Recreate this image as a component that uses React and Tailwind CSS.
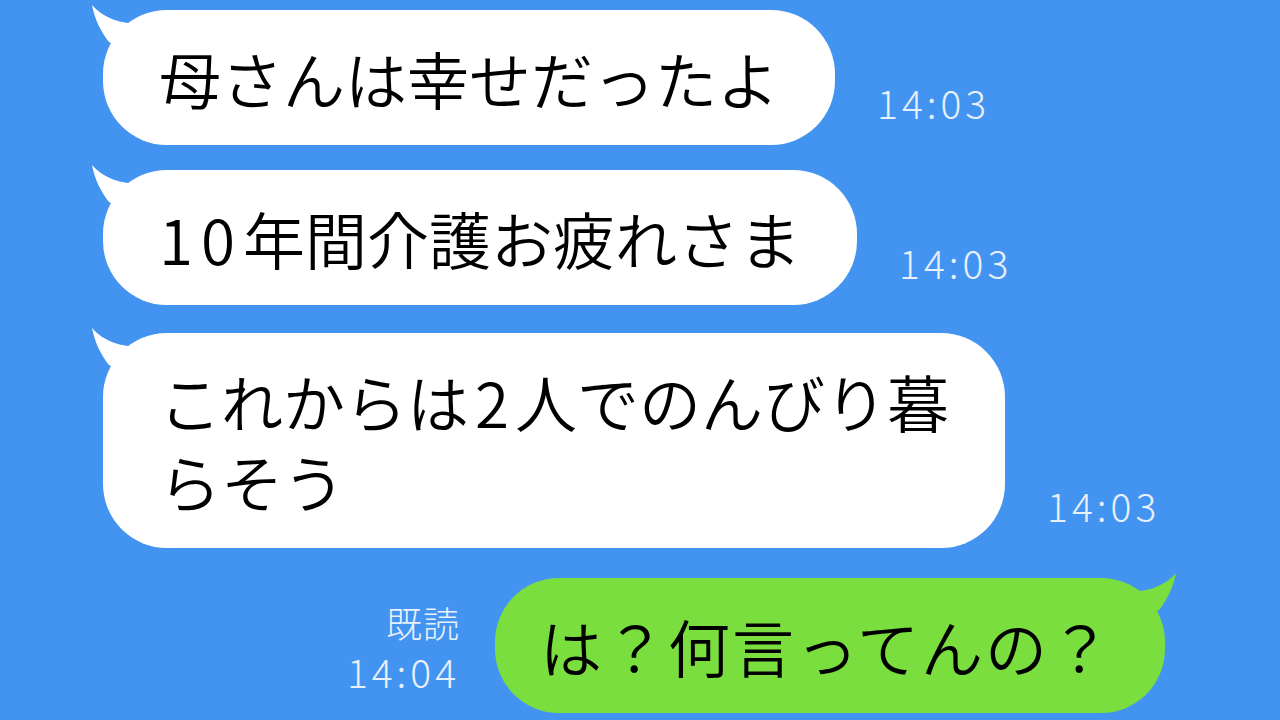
import React from "react";

const jp = "font-['Hiragino_Sans','Noto_Sans_CJK_JP',sans-serif]";

// bubble horn drawn over the top corner
const Tail = ({ color, right }) => (
  <svg
    width="60"
    height="60"
    viewBox="0 0 60 60"
    className={
      right
        ? "absolute right-[-14px] top-[-8px] -scale-x-100"
        : "absolute left-[-14px] top-[-8px]"
    }
  >
    <path d="M3 3 C 6 18, 12 30, 20 40 L 44 52 L 52 22 C 32 22, 14 16, 3 3 Z" fill={color} />
  </svg>
);

const Time = ({ children, className = "" }) => (
  <div className={`text-[39px] leading-none tracking-[4px] text-[#e8f0fb] font-light ${className}`}>
    {children}
  </div>
);

const Incoming = ({ children, time }) => (
  <div className="flex items-end gap-[42px]">
    <div className="relative rounded-[64px] bg-white px-[56px] py-[27.5px] text-[62px] leading-[80px] font-[350] text-black">
      <Tail color="#ffffff" />
      <div className="relative">{children}</div>
    </div>
    <Time className="mb-[23px]">{time}</Time>
  </div>
);

export default function App() {
  return (
    <div className={`w-[1280px] h-[720px] overflow-hidden bg-[#4394f0] ${jp}`}>
      <div className="flex flex-col pl-[103px] pt-[10px]">
        <Incoming time="14:03">母さんは幸せだったよ</Incoming>
        <div className="mt-[25px]">
          <Incoming time="14:03">
            <span className="tracking-[8px]">10</span>年間介護お疲れさま
          </Incoming>
        </div>
        <div className="mt-[28px]">
          <Incoming time="14:03">
            これからは<span className="mx-[6px]">2</span>人でのんびり暮
            <br />
            らそう
          </Incoming>
        </div>
        <div className="mt-[30px] flex items-end justify-end gap-[35px] pr-[115px]">
          <div className="mb-[22px] flex flex-col items-end gap-[12px] text-[#e8f0fb]">
            <div className="text-[36px] leading-none font-light tracking-[1px]">既読</div>
            <Time>14:04</Time>
          </div>
          <div className="relative rounded-[64px] bg-[#79de3e] py-[27.5px] pl-[45px] pr-[52px] text-[62px] leading-[80px] font-[350] tracking-[2px] text-black">
            <Tail color="#79de3e" right />
            <div className="relative">は？何言ってんの？</div>
          </div>
        </div>
      </div>
    </div>
  );
}
